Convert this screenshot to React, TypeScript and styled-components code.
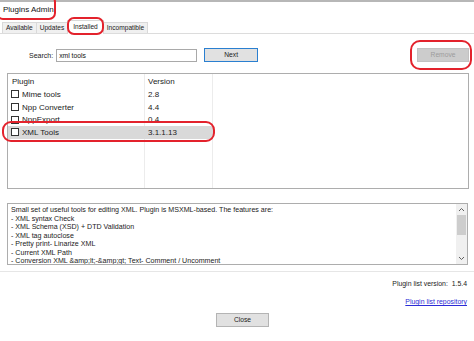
import React from 'react';
import styled, { createGlobalStyle } from 'styled-components';

const GlobalStyle = createGlobalStyle`
  html, body { margin: 0; padding: 0; background: #fff; }
  body { font-family: "Liberation Sans", Arial, sans-serif; color: #1b1b1b; }
`;

const Window = styled.div`
  position: relative;
  width: 474px;
  height: 341px;
  overflow: hidden;
  display: flex;
  flex-direction: column;
  background: #fff;
`;

const TopEdge = styled.div`
  height: 2px;
  background: #b7b7b7;
`;

const TitleBar = styled.div`
  height: 18px;
  line-height: 16px;
  padding-left: 3px;
  font-size: 8px;
  color: #111;
`;

const TabBar = styled.div`
  display: flex;
  align-items: flex-end;
  height: 13px;
  border-bottom: 1px solid #dcdcdc;
`;

const TabStrip = styled.div`
  display: flex;
  align-items: flex-end;
  padding-left: 3px;
`;

const Tab = styled.div<{ $active?: boolean }>`
  height: ${p => (p.$active ? 13 : 10)}px;
  line-height: ${p => (p.$active ? 12 : 10)}px;
  padding: 0 ${p => (p.$active ? 5 : 3)}px;
  font-size: 6.6px;
  background: ${p => (p.$active ? '#fff' : '#f0f0f0')};
  border: 1px solid #d9d9d9;
  border-bottom: none;
  margin-left: -1px;
  margin-bottom: ${p => (p.$active ? -1 : 0)}px;
  color: #222;
`;

const Body = styled.div`
  display: flex;
  flex-direction: column;
  padding: 14px 5px 0 7px;
`;

const SearchRow = styled.div`
  display: flex;
  align-items: center;
  height: 14px;
  padding-left: 22px;
`;

const Label = styled.span`
  font-size: 7px;
  margin-right: 3px;
  color: #222;
`;

const SearchInput = styled.div`
  box-sizing: border-box;
  width: 141px;
  height: 13px;
  border: 1px solid #a9a9a9;
  font-size: 6.8px;
  line-height: 11px;
  padding-left: 2px;
  color: #111;
`;

const Button = styled.div<{ $variant?: 'focus' | 'disabled' | 'normal'; $w: number }>`
  box-sizing: border-box;
  width: ${p => p.$w}px;
  height: 14px;
  line-height: 12px;
  text-align: center;
  font-size: 6.7px;
  background: ${p => (p.$variant === 'disabled' ? '#cccccc' : '#e1e1e1')};
  color: ${p => (p.$variant === 'disabled' ? '#9c9c9c' : '#1b1b1b')};
  border: 1px solid
    ${p => (p.$variant === 'focus' ? '#2a7fd0' : p.$variant === 'disabled' ? '#c2c2c2' : '#b4b4b4')};
`;

const Spacer = styled.div`
  flex: 1;
`;

const ListBox = styled.div`
  margin-top: 11px;
  height: 116px;
  box-sizing: border-box;
  border: 1px solid #adadad;
  background:
    linear-gradient(to right, transparent 136px, #ececec 136px, #ececec 137px, transparent 137px),
    linear-gradient(to right, transparent 204px, #ececec 204px, #ececec 205px, transparent 205px);
`;

const Row = styled.div<{ $head?: boolean; $selected?: boolean }>`
  display: grid;
  grid-template-columns: 136px 68px;
  width: 205px;
  height: ${p => (p.$head ? 14 : 12.7)}px;
  align-items: center;
  font-size: 8px;
  background: ${p => (p.$selected ? '#d9d9d9' : 'transparent')};
  color: #1b1b1b;
`;

const Cell = styled.div`
  display: flex;
  align-items: center;
  padding-left: 3px;
  white-space: nowrap;
`;

const Check = styled.span`
  box-sizing: border-box;
  width: 8px;
  height: 8px;
  border: 1px solid #333;
  background: #fff;
  margin-right: 3px;
`;

const Description = styled.div`
  margin-top: 14px;
  height: 62px;
  margin-right: 1px;
  box-sizing: border-box;
  border: 1px solid #adadad;
  display: flex;
  overflow: hidden;
`;

const DescText = styled.div`
  flex: 1;
  padding: 2px 3px;
  font-size: 7.1px;
  line-height: 8.5px;
  white-space: pre;
  color: #222;
  overflow: hidden;
`;

const ScrollBar = styled.div`
  width: 11px;
  background: #f0f0f0;
  display: flex;
  flex-direction: column;
  align-items: center;
`;

const ScrollArrow = styled.div`
  height: 11px;
  display: flex;
  align-items: center;
  justify-content: center;
`;

const Thumb = styled.div`
  width: 9px;
  height: 20px;
  background: #cdcdcd;
`;

const Separator = styled.div`
  margin-top: 6px;
  height: 1px;
  background: #e6e6e6;
`;

const Footer = styled.div`
  display: flex;
  flex-direction: column;
  align-items: flex-end;
  padding: 7px 7px 0 0;
  font-size: 6.9px;
  line-height: 9px;
  color: #222;
`;

const Link = styled.a`
  margin-top: 9px;
  color: #2b2bd6;
  text-decoration: underline;
`;

const CloseRow = styled.div`
  display: flex;
  padding: 7px 0 0 216px;
`;

const Mark = styled.div<{ $r?: number }>`
  position: absolute;
  box-sizing: border-box;
  border: 2px solid #e3222c;
  border-radius: ${p => p.$r ?? 7}px;
  pointer-events: none;
`;

const Chevron = ({ up }: { up?: boolean }) => (
  <svg width="7" height="5" viewBox="0 0 7 5">
    <path d={up ? 'M1 4 L3.5 1.5 L6 4' : 'M1 1 L3.5 3.5 L6 1'} fill="none" stroke="#606060" strokeWidth="1" />
  </svg>
);

const plugins = [
  { name: 'Mime tools', version: '2.8' },
  { name: 'Npp Converter', version: '4.4' },
  { name: 'NppExport', version: '0.4' },
  { name: 'XML Tools', version: '3.1.1.13', selected: true },
];

const descLines = [
  'Small set of useful tools for editing XML. Plugin is MSXML-based. The features are:',
  '- XML syntax Check',
  '- XML Schema (XSD) + DTD Validation',
  '- XML tag autoclose',
  '- Pretty print- Linarize XML',
  '- Current XML Path',
  '- Conversion XML &amp;lt;-&amp;gt; Text- Comment / Uncomment',
];

const App: React.FC = () => (
  <Window>
    <GlobalStyle />
    <TopEdge />
    <TitleBar>Plugins Admin</TitleBar>
    <TabBar>
      <TabStrip>
        <Tab>Available</Tab>
        <Tab>Updates</Tab>
        <Tab $active>Installed</Tab>
        <Tab>Incompatible</Tab>
      </TabStrip>
    </TabBar>
    <Body>
      <SearchRow>
        <Label>Search:</Label>
        <SearchInput>xml tools</SearchInput>
        <Button $variant="focus" $w={54} style={{ marginLeft: 7 }}>Next</Button>
        <Spacer />
        <Button $variant="disabled" $w={52}>Remove</Button>
      </SearchRow>
      <ListBox>
        <Row $head>
          <Cell style={{ paddingLeft: 4 }}>Plugin</Cell>
          <Cell style={{ paddingLeft: 4 }}>Version</Cell>
        </Row>
        {plugins.map(p => (
          <Row key={p.name} $selected={p.selected}>
            <Cell><Check />{p.name}</Cell>
            <Cell style={{ paddingLeft: 4 }}>{p.version}</Cell>
          </Row>
        ))}
      </ListBox>
      <Description>
        <DescText>{descLines.join('\n')}</DescText>
        <ScrollBar>
          <ScrollArrow><Chevron up /></ScrollArrow>
          <Thumb />
          <Spacer />
          <ScrollArrow><Chevron /></ScrollArrow>
        </ScrollBar>
      </Description>
    </Body>
    <Separator />
    <Footer>
      <span>Plugin list version:&nbsp;&nbsp;1.5.4</span>
      <Link href="#">Plugin list repository</Link>
    </Footer>
    <CloseRow>
      <Button $w={53}>Close</Button>
    </CloseRow>

    <Mark style={{ left: -4, top: -5, width: 60, height: 25 }} />
    <Mark style={{ left: 67, top: 17, width: 37, height: 18 }} />
    <Mark $r={10} style={{ left: 410, top: 40, width: 62, height: 30 }} />
    <Mark $r={9} style={{ left: 2, top: 121, width: 213, height: 21 }} />
  </Window>
);

export default App;
